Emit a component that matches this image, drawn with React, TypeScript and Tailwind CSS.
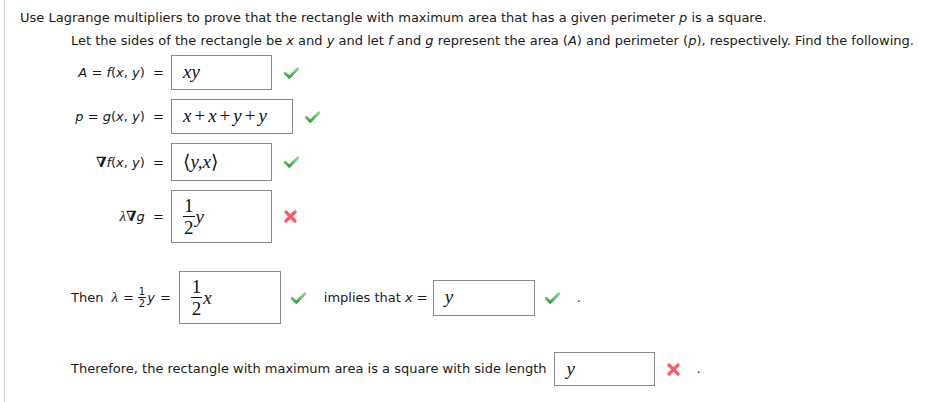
import React from "react";

function Check() {
  return (
    <svg width="15" height="12" viewBox="0 0 15 12" className="shrink-0">
      <defs>
        <linearGradient id="cg" x1="0" y1="0" x2="0" y2="1">
          <stop offset="0" stopColor="#8fd68f" />
          <stop offset="1" stopColor="#3e9b4a" />
        </linearGradient>
      </defs>
      <path d="M1.2 6.3 L5.3 10.3 L13.8 1.8" fill="none" stroke="url(#cg)" strokeWidth="3" strokeLinecap="round" strokeLinejoin="round" />
    </svg>
  );
}

function Cross() {
  return (
    <svg width="13" height="13" viewBox="0 0 13 13" className="shrink-0">
      <path d="M2 2 L11 11 M11 2 L2 11" fill="none" stroke="#f25f6c" strokeWidth="3.2" strokeLinecap="round" />
    </svg>
  );
}

const serif = "[font-family:'Liberation_Serif','DejaVu_Serif','Times_New_Roman',serif]";

function Box({ w, h, children }: { w: string; h: string; children: React.ReactNode }) {
  return (
    <div className={`${w} ${h} border border-[#8a8a8a] bg-white flex items-center pl-[11px] [font-family:'Liberation_Serif','DejaVu_Serif','Times_New_Roman',serif] italic text-[19px] text-[#111] shrink-0`}>
      {children}
    </div>
  );
}

function Frac({ size }: { size: "big" | "small" }) {
  if (size === "small") {
    return (
      <span className="inline-flex flex-col items-center ml-[4px] mr-[1px] text-[10px] leading-[11px] not-italic">
        <span className="px-[1px]">1</span>
        <span className="px-[1px] border-t border-[#222]">2</span>
      </span>
    );
  }
  return (
    <span className="inline-flex flex-col items-center not-italic text-[19px] leading-[21px] mr-[1px]">
      <span className="px-[1px]">1</span>
      <span className="px-[1px] border-t border-[#111]">2</span>
    </span>
  );
}

const i = "italic";

export default function App() {
  return (
    <div className="w-[947px] h-[402px] bg-white [font-family:DejaVu_Sans,sans-serif] text-[13px] text-[#1a1a1a] overflow-hidden">
      <div className="ml-[4px] h-full border-l border-[#cfcfcf] pl-[15px] pt-[9px]">
        <p className="leading-[18px]">
          Use Lagrange multipliers to prove that the rectangle with maximum area that has a given perimeter <span className={i}>p</span> is a square.
        </p>
        <div className="pl-[51px] pt-[5px]">
          <p className="leading-[18px]">
            Let the sides of the rectangle be <span className={i}>x</span> and <span className={i}>y</span> and let <span className={i}>f</span> and <span className={i}>g</span> represent the area (<span className={i}>A</span>) and perimeter (<span className={i}>p</span>), respectively. Find the following.
          </p>

          <div className="mt-[5px] grid grid-cols-[93px_auto] gap-x-[7px] gap-y-[9px] items-center w-max">
            <div className="text-right"><span className={i}>A</span> = <span className={i}>f</span>(<span className={i}>x</span>, <span className={i}>y</span>) &nbsp;=</div>
            <div className="flex items-center gap-[12px]">
              <Box w="w-[101px]" h="h-[35px]">xy</Box>
              <Check />
            </div>

            <div className="text-right"><span className={i}>p</span> = <span className={i}>g</span>(<span className={i}>x</span>, <span className={i}>y</span>) &nbsp;=</div>
            <div className="flex items-center gap-[12px]">
              <Box w="w-[122px]" h="h-[35px]">
                <span>x</span><span className="not-italic mx-[3px]">+</span><span>x</span><span className="not-italic mx-[3px]">+</span><span>y</span><span className="not-italic mx-[3px]">+</span><span>y</span>
              </Box>
              <Check />
            </div>

            <div className="text-right"><span className={`${serif} font-bold text-[14px]`}>∇</span><span className={i}>f</span>(<span className={i}>x</span>, <span className={i}>y</span>) &nbsp;=</div>
            <div className="flex items-center gap-[12px]">
              <Box w="w-[101px]" h="h-[38px]">
                <span className="not-italic">⟨</span>y,x<span className="not-italic">⟩</span>
              </Box>
              <Check />
            </div>

            <div className="text-right"><span className={`${serif} italic text-[15px]`}>λ</span><span className={`${serif} font-bold text-[14px]`}>∇</span><span className={i}>g</span> &nbsp;=</div>
            <div className="flex items-center gap-[12px]">
              <Box w="w-[101px]" h="h-[53px]">
                <Frac size="big" />
                <span className="mt-[2px]">y</span>
              </Box>
              <Cross />
            </div>
          </div>

          <div className="mt-[28px] flex items-center">
            <span>Then</span>
            <span className={`ml-[8px] ${serif} italic text-[15px]`}>λ</span>
            <span className="ml-[5px]">=</span>
            <Frac size="small" />
            <span className={i}>y</span>
            <span className="ml-[5px]">=</span>
            <div className="ml-[8px] flex items-center gap-[10px]">
              <Box w="w-[102px]" h="h-[53px]">
                <Frac size="big" />
                <span className="mt-[2px]">x</span>
              </Box>
              <Check />
            </div>
            <span className="ml-[18px]">implies that <span className={i}>x</span> =</span>
            <div className="ml-[5px] flex items-center gap-[10px]">
              <Box w="w-[102px]" h="h-[36px]">y</Box>
              <Check />
            </div>
            <span className="ml-[17px]">.</span>
          </div>

          <div className="mt-[28px] flex items-center">
            <span>Therefore, the rectangle with maximum area is a square with side length</span>
            <div className="ml-[8px] flex items-center gap-[12px]">
              <Box w="w-[101px]" h="h-[34px]">y</Box>
              <Cross />
            </div>
            <span className="ml-[16px]">.</span>
          </div>
        </div>
      </div>
    </div>
  );
}
